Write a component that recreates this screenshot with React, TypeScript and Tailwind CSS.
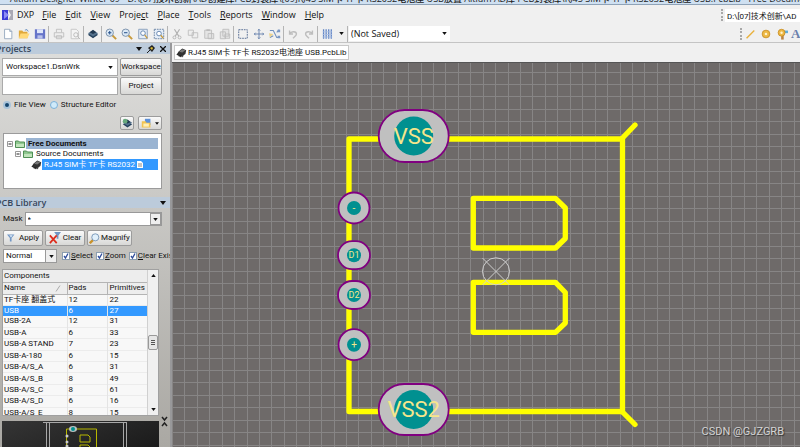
import React from "react";

const UI = "font-['Roboto','Liberation_Sans','Noto_Sans_CJK_SC',sans-serif]";
const MENU = "font-['Open_Sans','Noto_Sans_CJK_SC',sans-serif]";

const menus: [string, number][] = [
  ["File", 0], ["Edit", 0], ["View", 0], ["Project", 5], ["Place", 0],
  ["Tools", 0], ["Reports", 0], ["Window", 0], ["Help", 0],
];

const components: [string, number, number][] = [
  ["TF卡座 翻盖式", 12, 22],
  ["USB", 6, 27],
  ["USB-2A", 12, 31],
  ["USB-A", 6, 33],
  ["USB-A STAND", 7, 23],
  ["USB-A-180", 6, 15],
  ["USB-A/S_A", 6, 31],
  ["USB-A/S_B", 8, 49],
  ["USB-A/S_C", 8, 61],
  ["USB-A/S_D", 6, 16],
  ["USB-A/S_E", 8, 15],
];

function Icon({ children, size = 14 }: { children: React.ReactNode; size?: number }) {
  return (
    <svg width={size} height={size} viewBox="0 0 14 14" fill="none" aria-hidden="true" className="shrink-0">
      {children}
    </svg>
  );
}

function Tool({ label, children }: { label: string; children: React.ReactNode }) {
  return (
    <button type="button" aria-label={label} className="flex h-4 w-4 shrink-0 items-center justify-center">
      <Icon size={12}>{children}</Icon>
    </button>
  );
}

function Sep() {
  return <span className="mr-px h-4 w-px shrink-0 bg-[#b4b4b4]" />;
}

function Grip() {
  return <span className="h-3 w-0 shrink-0 border-l-2 border-dotted border-[#a8a8a8]" />;
}

function Down({ className = "" }: { className?: string }) {
  return (
    <svg width="6" height="4" viewBox="0 0 6 4" aria-hidden="true" className={className}>
      <path d="M0 0h6L3 4z" fill="#111" />
    </svg>
  );
}

function Chip() {
  return (
    <>
      <path d="M3 6l5-4 5 2-1 5-6 4-5-3z" fill="#333" />
      <path d="M4 6l4-3 4 1-4 3z" fill="#777" />
      <path d="M1 10l2-2M4 12l2-2M8 13l1-2" stroke="#111" />
    </>
  );
}

function Layers() {
  return (
    <>
      <path d="M1 8l6-3 6 3-6 4z" fill="#24405c" />
      <path d="M1 6l6-3 6 3-6 4z" fill="#54718c" />
      <path d="M3 5l4-3 4 3-4 2z" fill="#203850" />
    </>
  );
}

function Lens({ sign }: { sign: string }) {
  return (
    <>
      <path d="M8.500 8.500L13 13" stroke="#c79a3c" strokeWidth="2.200" />
      <circle cx="5.500" cy="5.500" r="4.300" fill="#dbe9f6" stroke="#6f87a3" />
      <path d={sign} stroke="#27508a" strokeWidth="1.200" />
    </>
  );
}

function Folder() {
  return (
    <svg width="10" height="8" viewBox="0 0 10 8" aria-hidden="true" className="shrink-0">
      <path d="M0.500 1h3l1 1h5v5.500h-9z" fill="#8fc78f" stroke="#4f8f55" />
      <path d="M1 4h8v3h-8z" fill="#c0e4bb" />
    </svg>
  );
}

function Expander() {
  return (
    <svg width="6" height="6" viewBox="0 0 6 6" aria-hidden="true" className="shrink-0">
      <path d="M.5.5h5v5h-5z" fill="#fff" stroke="#999" />
      <path d="M1.500 3h3" stroke="#222" />
    </svg>
  );
}

function TitleBar() {
  return (
    <header className="flex h-[5px] shrink-0 items-end overflow-hidden border-b border-[#8fa3b8] bg-[#cfe0f1]">
      <h1 className={`${MENU} pl-[10px] text-[9px] leading-[10px] font-medium whitespace-nowrap text-[#222]`}>
        Altium Designer Winter 09 - D:\[07]技术创新\AD创建库PCB封装库\[09]RJ45 SIM卡 TF卡 RS2032电池座 USB放置 Altium AD库 PCB封装库\RJ45 SIM卡 TF卡 RS2032电池座 USB.PcbLib - Free Documents
      </h1>
    </header>
  );
}

function MenuBar() {
  return (
    <nav className={`${MENU} flex h-5 shrink-0 items-center text-[9px] text-[#111]`}>
      <svg width="12" height="12" viewBox="0 0 12 12" aria-hidden="true" className="ml-[2px] shrink-0">
        <path d="M0 1h6v10H0z" fill="#3b3bd6" />
        <path d="M2 2l5 4-5 4z" fill="#8d8df4" />
        <path d="M6 1h5v10H6l3-5z" fill="#a9a9b4" />
      </svg>
      <button type="button" className="ml-[3px]">DXP</button>
      <div className="ml-2 flex gap-[9px]">
        {menus.map(([name, i]) => (
          <button type="button" key={name}>
            {name.slice(0, i)}
            <span className="underline">{name[i]}</span>
            {name.slice(i + 1)}
          </button>
        ))}
      </div>
      <div className="ml-auto flex items-center gap-[2px]">
        <Grip />
        <input aria-label="Path" readOnly value="D:\[07]技术创新\AD" className={`${UI} h-[13px] w-[75px] bg-white pl-[2px] text-[8px]`} />
      </div>
    </nav>
  );
}

function ToolBar() {
  return (
    <div className="flex h-[18px] shrink-0 items-center border-b border-[#c4c4c4]" role="toolbar" aria-label="Standard">
      <Tool label="New"><path d="M3 1.500h6l2.500 2.500v8.500H3z" fill="#fff" stroke="#90a4bb" /><path d="M9 1.500V4h2.500" stroke="#90a4bb" /></Tool>
      <Tool label="Open"><path d="M1 3h4l1 1.500h5V12H1z" fill="#e0a93c" /><path d="M3 6.500h10.500L11 12H1z" fill="#ffd978" /><path d="M8 2.500q3-2 4 1.500" stroke="#5c87bb" /></Tool>
      <Tool label="Save"><path d="M1 1.500h12v11H1z" fill="#6674c9" /><path d="M3.500 1.500h7V6h-7z" fill="#dfe6fa" /><path d="M4 8.500h6v4H4z" fill="#b8c0ea" /></Tool>
      <Sep />
      <span className="w-px" />
      <Tool label="Print"><path d="M4 5V1.500h6V5M1.500 5.500h11v5h-11zM4 9h6v3.500H4z" fill="#eee" stroke="#bcbcbc" /></Tool>
      <Tool label="Preview"><path d="M2.500 1.500h6L11 4v8.500H2.500z" fill="#f4f4f4" stroke="#c2c2c2" /><circle cx="8" cy="8" r="2.500" stroke="#b4b4b4" /><path d="M10 10l3 3" stroke="#b4b4b4" /></Tool>
      <Sep />
      <Tool label="Layers"><Layers /></Tool>
      <Sep />
      <Tool label="Zoom in"><Lens sign="M3.500 5.500h4M5.500 3.500v4" /></Tool>
      <Tool label="Zoom out"><Lens sign="M3.500 5.500h4" /></Tool>
      <Tool label="Fit document"><path d="M2 1.500h10v11H2z" fill="#e4edf8" stroke="#8198b8" /><circle cx="7" cy="6" r="2.700" fill="#fff" stroke="#557aa8" /><path d="M9 8l3 4" stroke="#c79a3c" strokeWidth="1.500" /></Tool>
      <Tool label="Zoom area"><path d="M1.500 1.500h11v11h-11z" fill="#e4edf8" stroke="#5d789c" strokeDasharray="2 1" /><circle cx="7" cy="6.500" r="2.700" fill="#fff" stroke="#557aa8" /><path d="M9 8.500l3 3.500" stroke="#c79a3c" strokeWidth="1.500" /></Tool>
      <Sep />
      <Tool label="Cut"><path d="M4 1.500l5 8M10 1.500l-5 8" stroke="#b0b0b0" strokeWidth="1.300" /><circle cx="4" cy="11" r="1.700" stroke="#b0b0b0" /><circle cx="10" cy="11" r="1.700" stroke="#b0b0b0" /></Tool>
      <Tool label="Copy"><path d="M1.500 2.500h6v6h-6zM6 5.500h6.500v6H6z" fill="#eee" stroke="#bcbcbc" /></Tool>
      <Tool label="Paste"><path d="M2 2.500h8V12H2zM6 6.500h6.500v6H6z" fill="#e4e4e4" stroke="#bcbcbc" /><path d="M4 1.500h4v2H4z" fill="#bbb" /></Tool>
      <Tool label="Paste array"><path d="M4.500 1.500h7v8h-7zM1.500 4.500h6v8h-6zM7 7h5.500v5H7z" fill="#e4e4e4" stroke="#bcbcbc" /></Tool>
      <Sep />
      <Tool label="Select inside"><path d="M2 2h10v10H2z" stroke="#47608a" strokeDasharray="2 1" /></Tool>
      <Tool label="Move"><path d="M7 1.500v11M1.500 7h11M5.500 3L7 1.500 8.500 3M5.500 11L7 12.500 8.500 11M3 5.500L1.500 7 3 8.500M11 5.500L12.500 7 11 8.500" stroke="#5d7ba8" /></Tool>
      <Tool label="Clear filter"><path d="M1 3l4 0 4 8 4 0M1 11L5 9M9 5l3-3" stroke="#6f8fbd" strokeWidth="1.200" /><path d="M0 6l5 1-4 4z" fill="#ecd28a" /><path d="M10 2h3v3h-3zM10 9h3v3h-3z" fill="#7b98c4" /></Tool>
      <Sep />
      <Tool label="Undo"><path d="M3 3v4h4M3 7c2-4 8-3 8 0 0 2-2 3-4 5" stroke="#bdbdbd" strokeWidth="1.600" /></Tool>
      <Tool label="Redo"><path d="M11 3v4H7M11 7C9 3 3 4 3 7c0 2 2 3 4 5" stroke="#bdbdbd" strokeWidth="1.600" /></Tool>
      <Sep />
      <Tool label="Grid"><path d="M3 1.500v11M6 1.500v11M9 1.500v11M12 1.500v11" stroke="#5f84c4" strokeWidth="1.500" /><path d="M2 4.500h11M2 7.500h11M2 10.500h11" stroke="#a9bfe4" /></Tool>
      <button type="button" aria-label="Grid options" className="flex w-3 justify-center"><Down className="h-[3px] w-[5px]" /></button>
      <Sep />
      <div className="relative h-[15px] w-[101px] bg-white">
        <select aria-label="View" className={`${MENU} h-full w-full appearance-none pl-[2px] text-[9px] leading-[14px] text-[#111]`}>
          <option>(Not Saved)</option>
        </select>
        <Down className="absolute top-[6px] right-[3px] h-[3px] w-[5px]" />
      </div>
      <div className="ml-auto flex w-[60px] shrink-0 items-center overflow-hidden">
        <Grip />
        <Tool label="Place line"><path d="M3 12L12 3" stroke="#e9b03a" strokeWidth="1.600" /></Tool>
        <Tool label="Place pad"><circle cx="7" cy="7" r="4.500" fill="#edb945" stroke="#c98d23" /><circle cx="7" cy="7" r="1.500" fill="#fff3cd" /></Tool>
        <Tool label="Place via"><path d="M6 8h3v5.500H6z" fill="#b98445" /><path d="M9 3h5v3H9z" fill="#5eaede" /><circle cx="6.500" cy="5.500" r="4" fill="#edb945" stroke="#c98d23" /><circle cx="6.500" cy="5.500" r="1.400" fill="#fff3cd" /></Tool>
        <button type="button" aria-label="Place string" className="ml-px shrink-0 font-['Liberation_Serif',serif] text-[13px] leading-4 font-bold text-[#6a80ac]">A</button>
      </div>
    </div>
  );
}

function PanelHeader({ title, children }: { title: string; children?: React.ReactNode }) {
  return (
    <div className="flex h-[11px] shrink-0 items-center justify-between bg-[#bccbdb] pr-1">
      <h2 className={`${MENU} -ml-1 text-[9px] leading-[11px] font-semibold text-[#37475c]`}>{title}</h2>
      <div className="flex items-center gap-[5px]">
        <Down />
        {children}
      </div>
    </div>
  );
}

const BTN = "flex items-center justify-center rounded-[2px] border border-[#9c9c9c] bg-linear-to-b from-[#fafafa] to-[#d8d8d6] whitespace-nowrap";

function ProjectsPanel() {
  return (
    <section className="shrink-0">
      <PanelHeader title="Projects">
        <svg width="8" height="8" viewBox="0 0 8 8" aria-hidden="true"><path d="M0 8l3-3" stroke="#222" /><path d="M1 3l4-3 3 3-3 4z" fill="#222" /><path d="M3 3l2-1 1 1-1 2z" fill="#e4c435" /></svg>
        <svg width="6" height="6" viewBox="0 0 6 6" aria-hidden="true"><path d="M0 0l6 6M6 0L0 6" stroke="#111" strokeWidth="1.300" /></svg>
      </PanelHeader>
      <div className="mt-1 mr-2 ml-[2px] grid grid-cols-[1fr_42px] gap-x-[2px] gap-y-px">
        <div className="relative h-[18px] border border-[#aaa] bg-white">
          <select aria-label="Workspace file" className="h-full w-full appearance-none pl-[3px] leading-4">
            <option>Workspace1.DsnWrk</option>
          </select>
          <Down className="absolute top-[7px] right-1 h-[3px] w-[5px]" />
        </div>
        <button type="button" className={BTN}>Workspace</button>
        <input aria-label="Project file" className="h-[18px] w-full border border-[#aaa] bg-white" />
        <button type="button" className={BTN}>Project</button>
      </div>
      <div className="mt-1 ml-[3px] flex h-3 items-center gap-1">
        <label className="flex items-center gap-[3px]">
          <input type="radio" name="view" defaultChecked className="h-2 w-2 appearance-none rounded-full border border-[#5b7d9c] bg-[#dceaf5] checked:border-2 checked:border-[#a9c4da] checked:bg-[#14456e]" />
          File View
        </label>
        <label className="flex items-center gap-[3px]">
          <input type="radio" name="view" className="h-2 w-2 appearance-none rounded-full border border-[#7cb1d8] bg-[#cfeafa]" />
          Structure Editor
        </label>
      </div>
      <div className="mt-[5px] mr-2 flex justify-end gap-1">
        <button type="button" aria-label="Compile" className={`${BTN} h-[14px] w-[14px]`}><Icon size={11}><Layers /><circle cx="4" cy="4" r="3" fill="#67a97c" /></Icon></button>
        <button type="button" aria-label="Open project" className={`${BTN} h-[14px] w-6 gap-[3px]`}>
          <Icon size={11}><path d="M5 1h7v8H5z" fill="#5e91d8" /><path d="M1 4h5l1 2h5v6H1z" fill="#f1c352" /><path d="M3 7h7v4H3z" fill="#fff0b8" /></Icon>
          <Down className="h-[3px] w-[4px]" />
        </button>
      </div>
      <ul className="mt-[3px] mr-2 ml-[3px] h-[56px] overflow-hidden border border-[#9b9b9b] bg-white pt-1 pr-[3px]" role="tree">
        <li className="flex h-[11px] items-center gap-[2px] pl-[3px]"><Expander /><Folder /><span className="-ml-px flex-1 bg-[#9ab4d2] pl-[2px] leading-[11px] font-bold">Free Documents</span></li>
        <li className="flex h-[10px] items-center gap-[2px] pl-[11px]"><Expander /><Folder /><span className="pl-px">Source Documents</span></li>
        <li className="flex h-[11px] items-center pl-[27px]">
          <Icon size={11}><Chip /></Icon>
          <span className="flex h-[11px] min-w-0 flex-1 items-center bg-[#3399ff] text-white">
            <span className="w-[94px] overflow-hidden pl-[2px] leading-[11px] whitespace-nowrap">RJ45 SIM卡 TF卡 RS2032电池座 USB.PcbLib</span>
            <svg width="6" height="7" viewBox="0 0 6 7" aria-hidden="true" className="ml-px"><path d="M0 0h4l2 2v5H0z" fill="#fff" /><path d="M1 3h4M1 5h4" stroke="#888" /></svg>
          </span>
        </li>
      </ul>
    </section>
  );
}

function ComponentTable() {
  return (
    <div className="mt-[6px] mr-[11px] ml-[2px] flex h-[147px] shrink-0 overflow-hidden border border-[#a0a0a0] bg-[#f8f8f8]">
      <div className="flex-1 overflow-hidden">
        <table className="h-[149px] w-full table-fixed border-collapse text-left">
          <colgroup><col className="w-[64px]" /><col className="w-10" /><col /></colgroup>
          <thead className="bg-[#ededed]">
            <tr className="h-3"><th colSpan={3} className="border-b border-[#b4b4b4] p-0 pl-px leading-[10px] font-normal">Components</th></tr>
            <tr className="h-3 border-b border-[#b4b4b4]">
              <th className="p-0 pl-px leading-[10px] font-normal"><span className="flex justify-between pr-1.5">Name<svg width="6" height="7" viewBox="0 0 6 7" aria-hidden="true" className="self-center"><path d="M1 6.500L5 0.500" stroke="#aaa" /></svg></span></th>
              <th className="border-l border-[#b4b4b4] p-0 pl-px leading-[10px] font-normal">Pads</th>
              <th className="border-l border-[#b4b4b4] p-0 pl-[2px] leading-[10px] font-normal">Primitives</th>
            </tr>
          </thead>
          <tbody>
            {components.map(([name, pads, prims]) => (
              <tr key={name} className={name === "USB" ? "bg-[#3399ff] text-white" : "border-b border-[#ececec]"}>
                <td className="p-0 pl-px leading-[10px] whitespace-nowrap">{name}</td>
                <td className="border-l border-[#e4e4e4] p-0 pl-px leading-[10px]">{pads}</td>
                <td className="border-l border-[#e4e4e4] p-0 pl-[2px] leading-[10px]">{prims}</td>
              </tr>
            ))}
          </tbody>
        </table>
      </div>
      <div className="flex w-[11px] flex-col items-center justify-between border-l border-[#d0d0d0] bg-[#f0f0f0] py-1">
        <Down className="h-[3px] w-[5px] rotate-180" />
        <span className="flex h-[15px] w-[10px] flex-col items-center justify-center gap-px rounded-[2px] border border-[#999] bg-[#e6e6e6]">
          <i className="h-px w-1 bg-[#555]" /><i className="h-px w-1 bg-[#555]" /><i className="h-px w-1 bg-[#555]" />
        </span>
        <Down className="h-[3px] w-[5px]" />
      </div>
    </div>
  );
}

function LibraryPanel() {
  return (
    <section className="mt-2 flex min-h-0 flex-1 flex-col">
      <PanelHeader title="PCB Library" />
      <div className="mt-1 mr-2 ml-[3px] flex h-[14px] shrink-0 items-center gap-[2px]">
        <label htmlFor="mask">Mask</label>
        <div className="flex h-[14px] flex-1 border border-[#999] bg-white">
          <input id="mask" defaultValue="*" className="h-full w-0 flex-1 pl-[2px]" />
          <button type="button" aria-label="Mask history" className="flex w-[11px] items-center justify-center border border-[#999] bg-[#eee]"><Down className="h-[3px] w-[5px]" /></button>
        </div>
      </div>
      <div className="mt-1 ml-[3px] flex h-4 shrink-0 gap-[2px]">
        <button type="button" className={`${BTN} w-10 gap-1`}><Icon size={8}><path d="M0 1h13L8 7v6H5V7z" fill="#7196c4" /><path d="M4 2h6L7 6z" fill="#dceaf8" /></Icon>Apply</button>
        <button type="button" className={`${BTN} w-10 gap-[2px]`}><Icon size={12}><path d="M6 0h8l-3 4v4H9V4z" fill="#7196c4" /><path d="M1 4l8 9M9 4l-8 9" stroke="#dd2c1c" strokeWidth="2" /></Icon>Clear</button>
        <button type="button" className={`${BTN} w-[45px] gap-px`}><Icon size={11}><path d="M1 13l4-4" stroke="#c9922b" strokeWidth="3" /><circle cx="8" cy="5.500" r="4.500" fill="#e1f0fb" stroke="#6687ac" /></Icon>Magnify</button>
      </div>
      <div className="mt-[3px] ml-[3px] flex h-[14px] shrink-0 items-center">
        <div className="relative h-[14px] w-[54px] shrink-0 border border-[#999] bg-white">
          <select aria-label="Filter mode" className="h-full w-full appearance-none pl-[2px] leading-3"><option>Normal</option></select>
          <span className="pointer-events-none absolute top-0 right-0 flex h-3 w-[11px] items-center justify-center border-l border-[#999] bg-[#eee]"><Down className="h-[3px] w-[5px]" /></span>
        </div>
        <div className="ml-[5px] flex gap-[3px] overflow-hidden whitespace-nowrap">
          {["Select", "Zoom", "Clear Existing"].map((t) => (
            <label key={t} className="flex shrink-0 items-center gap-px">
              <span className="relative flex h-2 w-2">
                <input type="checkbox" defaultChecked className="h-2 w-2 appearance-none border border-[#8a9db0] bg-white" />
                <svg width="8" height="8" viewBox="0 0 8 8" aria-hidden="true" className="pointer-events-none absolute inset-0"><path d="M2 4l1.500 2L6 1.500" fill="none" stroke="#2d4b9b" strokeWidth="1.300" /></svg>
              </span>
              <span><u>{t[0]}</u>{t.slice(1)}</span>
            </label>
          ))}
        </div>
      </div>
      <ComponentTable />
      <div className="flex min-h-0 flex-1 overflow-hidden">
        <svg className="mt-[5px] ml-[2px] h-[60px] w-[157px] shrink-0" aria-label="Footprint preview">
          <defs><linearGradient id="pv" x1="0" y1="0" x2="1" y2="1"><stop stopColor="#353535" /><stop offset="1" stopColor="#101010" /></linearGradient></defs>
          <path d="M0 0h157v60H0z" fill="url(#pv)" />
          <path d="M41 1.500h84M44.500 1v60M47.500 1v60M121.500 1v60M124.500 1v60" stroke="#a8a8a8" fill="none" />
          <path d="M64.500 60V8h30v52M78 14h8l2 2v5H78zM78 24h8l2 2v6H78z" stroke="#b8b800" fill="none" />
          <ellipse cx="71" cy="8" rx="4" ry="3" fill="#b8c0c0" /><circle cx="71" cy="8" r="2" fill="#009090" />
          <circle cx="65" cy="15" r="1.500" fill="#ccc" /><circle cx="65" cy="21" r="1.500" fill="#ccc" /><circle cx="65" cy="25" r="1.500" fill="#ccc" />
        </svg>
        <svg width="7" height="11" viewBox="0 0 7 11" aria-hidden="true" className="ml-[2px] shrink-0"><path d="M1 1l2.500 3L6 1M1 10l2.500-3L6 10" stroke="#222" strokeWidth="1.500" fill="none" /></svg>
      </div>
    </section>
  );
}

const gridX = Array.from({ length: 160 }, (_, i) => Math.round(495.200 + (i - 26) * 12.430) + 0.5);
const gridY = Array.from({ length: 100 }, (_, i) => Math.round(270.500 + (i - 16) * 12.430) + 0.5);

function Pad({ x, y, w, h, hole, label, size }: { x: number; y: number; w: number; h: number; hole: number; label: string; size: number }) {
  return (
    <g>
      <rect x={x - w / 2} y={y - h / 2} width={w} height={h} rx={h / 2} fill="#c0c0c0" stroke="#800080" strokeWidth="1.800" />
      <circle cx={x} cy={y} r={hole} fill="#009090" />
      <text x={x} y={y + size * 0.360} textAnchor="middle" fontSize={size} fill="#f5e68c" className="font-['Roboto','Liberation_Sans',sans-serif] font-normal">{label}</text>
    </g>
  );
}

function Editor() {
  return (
    <main className="relative min-h-0 flex-1 overflow-hidden border-t border-[#555] bg-[#6e6a69]">
      <svg className="block h-full w-full" aria-label="USB footprint">
        <g transform="translate(-172 -63)">
          {gridX.map((x) => <path key={x} d={`M${x} 60V1400`} stroke="#878585" />)}
          {gridY.map((y) => <path key={y} d={`M170 ${y}H2200`} stroke="#878585" />)}
          <g stroke="#ffff00" strokeWidth="5.300" fill="none" strokeLinecap="round" strokeLinejoin="round">
            <path d="M349 139H622.500V411.500H349z" />
            <path d="M622.500 138L635 125M622.500 412L635 424.500" />
            <path d="M473.300 198.300H555.500L565.300 208V238.500L555.500 248H473.300z" />
            <path d="M473.300 282.300H555.500L565.300 292.500V323L555.500 332.300H473.300z" />
          </g>
          <Pad x={413.700} y={136} w={70} h={52} hole={19.500} label="VSS" size={22} />
          <Pad x={413.700} y={409.500} w={70} h={51} hole={19.500} label="VSS2" size={22} />
          <Pad x={354} y={208} w={31} h={31} hole={7} label="-" size={10} />
          <Pad x={354} y={255.200} w={32} h={28} hole={7} label="D1" size={9} />
          <Pad x={354} y={295} w={32} h={28} hole={7} label="D2" size={9} />
          <Pad x={354} y={344.700} w={31} h={31} hole={7} label="+" size={10} />
          <g stroke="#cfcfcf" fill="none">
            <circle cx="496" cy="271.300" r="13.500" />
            <path d="M482.500 258l27 27M509.500 258l-27 27" />
          </g>
        </g>
      </svg>
      <span className={`${UI} absolute right-4 bottom-2 text-[11px] leading-[14px] text-[#d4d4d4] [text-shadow:1px_1px_1px_#333]`}>CSDN @GJZGRB</span>
    </main>
  );
}

export default function App() {
  return (
    <div className={`${UI} flex h-screen flex-col overflow-hidden bg-[#f0f0f0] text-[8px] leading-[10px] text-[#111]`}>
      <TitleBar />
      <MenuBar />
      <ToolBar />
      <div className="flex min-h-0 flex-1">
        <aside className="flex w-[172px] shrink-0 flex-col overflow-hidden border-r-2 border-[#98989a] bg-linear-to-b from-[#dededc] to-[#aaa8a3]">
          <ProjectsPanel />
          <LibraryPanel />
        </aside>
        <div className="flex min-w-0 flex-1 flex-col">
          <div className="flex h-[19px] shrink-0 items-center pl-[2px]">
            <button type="button" className="flex h-[15px] items-center gap-px border border-[#c8c8c8] bg-white px-px whitespace-nowrap">
              <Icon size={11}><Chip /></Icon>
              <span>RJ45 SIM卡 TF卡 RS2032电池座 USB.PcbLib</span>
            </button>
          </div>
          <Editor />
        </div>
      </div>
    </div>
  );
}
